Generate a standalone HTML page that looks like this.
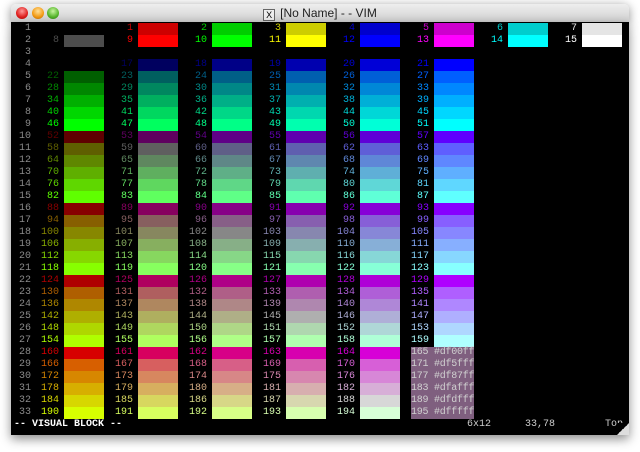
<!DOCTYPE html>
<html><head><meta charset="utf-8"><style>
body{margin:0;width:640px;height:452px;background:#fff;position:relative;overflow:hidden;font-family:"Liberation Mono",monospace}
#tb{position:absolute;left:11px;top:4px;width:618px;height:18px;background:linear-gradient(#eeeeee,#d0d0d0);border-radius:5px 5px 0 0;box-shadow:0 2px 10px rgba(0,0,0,.45)}
.dot{position:absolute;top:3px;width:12px;height:12px;border-radius:50%}
#title{position:absolute;left:0;right:0;top:2px;text-align:center;font:12px "Liberation Sans",sans-serif;color:#222}
#xi{display:inline-block;width:10px;height:10px;border:1px solid #666;background:#eee;font-size:9px;line-height:10px;vertical-align:-1px;margin-right:5px;color:#000}
#t{position:absolute;left:11px;top:22px;width:618px;height:413px;background:#000;box-shadow:0 4px 10px rgba(0,0,0,.45);font-size:10px;line-height:12px}
p{margin:0;height:12px;position:relative;padding-left:19px;white-space:nowrap}
p a{position:absolute;left:0;width:20px;text-align:right;color:#8a8a8a}
u{display:inline-block;width:29px;text-align:right;margin-right:45px;text-decoration:none;position:relative;height:12px;vertical-align:top}
u::after{content:"";position:absolute;left:34px;top:0;width:40px;height:12px;background:currentColor}
.s{position:absolute;left:400px;top:0;width:63px;height:12px;background:#7f5f7f;color:#d0d0d0;letter-spacing:-.25px}
#st{position:absolute;left:3px;top:397px;width:612px;color:#fff;height:12px}
</style></head><body>
<div id="tb">
<div class="dot" style="left:5px;background:radial-gradient(circle at 50% 35%,#ff9a9a,#e0201e 60%,#a00)"></div>
<div class="dot" style="left:21px;background:radial-gradient(circle at 50% 35%,#ffe09a,#f39a12 60%,#b86000)"></div>
<div class="dot" style="left:36px;background:radial-gradient(circle at 50% 35%,#c8f5a0,#55b52a 60%,#2a7a10)"></div>
<div id="title"><span id="xi">X</span>[No Name] - - VIM</div>
</div>
<div id="t"><div style="height:1px"></div>
<p><a>1</a><u style="color:#000">0</u><u style="color:#cd0000">1</u><u style="color:#00cd00">2</u><u style="color:#cdcd00">3</u><u style="color:#0000cd">4</u><u style="color:#cd00cd">5</u><u style="color:#00cdcd">6</u><u style="color:#e5e5e5">7</u></p>
<p><a>2</a><u style="color:#4d4d4d">8</u><u style="color:#ff0000">9</u><u style="color:#00ff00">10</u><u style="color:#ffff00">11</u><u style="color:#0000ff">12</u><u style="color:#ff00ff">13</u><u style="color:#00ffff">14</u><u style="color:#ffffff">15</u></p>
<p><a>3</a></p>
<p><a>4</a><u style="color:#000000">16</u><u style="color:#00005f">17</u><u style="color:#000087">18</u><u style="color:#0000af">19</u><u style="color:#0000d7">20</u><u style="color:#0000ff">21</u></p>
<p><a>5</a><u style="color:#005f00">22</u><u style="color:#005f5f">23</u><u style="color:#005f87">24</u><u style="color:#005faf">25</u><u style="color:#005fd7">26</u><u style="color:#005fff">27</u></p>
<p><a>6</a><u style="color:#008700">28</u><u style="color:#00875f">29</u><u style="color:#008787">30</u><u style="color:#0087af">31</u><u style="color:#0087d7">32</u><u style="color:#0087ff">33</u></p>
<p><a>7</a><u style="color:#00af00">34</u><u style="color:#00af5f">35</u><u style="color:#00af87">36</u><u style="color:#00afaf">37</u><u style="color:#00afd7">38</u><u style="color:#00afff">39</u></p>
<p><a>8</a><u style="color:#00d700">40</u><u style="color:#00d75f">41</u><u style="color:#00d787">42</u><u style="color:#00d7af">43</u><u style="color:#00d7d7">44</u><u style="color:#00d7ff">45</u></p>
<p><a>9</a><u style="color:#00ff00">46</u><u style="color:#00ff5f">47</u><u style="color:#00ff87">48</u><u style="color:#00ffaf">49</u><u style="color:#00ffd7">50</u><u style="color:#00ffff">51</u></p>
<p><a>10</a><u style="color:#5f0000">52</u><u style="color:#5f005f">53</u><u style="color:#5f0087">54</u><u style="color:#5f00af">55</u><u style="color:#5f00d7">56</u><u style="color:#5f00ff">57</u></p>
<p><a>11</a><u style="color:#5f5f00">58</u><u style="color:#5f5f5f">59</u><u style="color:#5f5f87">60</u><u style="color:#5f5faf">61</u><u style="color:#5f5fd7">62</u><u style="color:#5f5fff">63</u></p>
<p><a>12</a><u style="color:#5f8700">64</u><u style="color:#5f875f">65</u><u style="color:#5f8787">66</u><u style="color:#5f87af">67</u><u style="color:#5f87d7">68</u><u style="color:#5f87ff">69</u></p>
<p><a>13</a><u style="color:#5faf00">70</u><u style="color:#5faf5f">71</u><u style="color:#5faf87">72</u><u style="color:#5fafaf">73</u><u style="color:#5fafd7">74</u><u style="color:#5fafff">75</u></p>
<p><a>14</a><u style="color:#5fd700">76</u><u style="color:#5fd75f">77</u><u style="color:#5fd787">78</u><u style="color:#5fd7af">79</u><u style="color:#5fd7d7">80</u><u style="color:#5fd7ff">81</u></p>
<p><a>15</a><u style="color:#5fff00">82</u><u style="color:#5fff5f">83</u><u style="color:#5fff87">84</u><u style="color:#5fffaf">85</u><u style="color:#5fffd7">86</u><u style="color:#5fffff">87</u></p>
<p><a>16</a><u style="color:#870000">88</u><u style="color:#87005f">89</u><u style="color:#870087">90</u><u style="color:#8700af">91</u><u style="color:#8700d7">92</u><u style="color:#8700ff">93</u></p>
<p><a>17</a><u style="color:#875f00">94</u><u style="color:#875f5f">95</u><u style="color:#875f87">96</u><u style="color:#875faf">97</u><u style="color:#875fd7">98</u><u style="color:#875fff">99</u></p>
<p><a>18</a><u style="color:#878700">100</u><u style="color:#87875f">101</u><u style="color:#878787">102</u><u style="color:#8787af">103</u><u style="color:#8787d7">104</u><u style="color:#8787ff">105</u></p>
<p><a>19</a><u style="color:#87af00">106</u><u style="color:#87af5f">107</u><u style="color:#87af87">108</u><u style="color:#87afaf">109</u><u style="color:#87afd7">110</u><u style="color:#87afff">111</u></p>
<p><a>20</a><u style="color:#87d700">112</u><u style="color:#87d75f">113</u><u style="color:#87d787">114</u><u style="color:#87d7af">115</u><u style="color:#87d7d7">116</u><u style="color:#87d7ff">117</u></p>
<p><a>21</a><u style="color:#87ff00">118</u><u style="color:#87ff5f">119</u><u style="color:#87ff87">120</u><u style="color:#87ffaf">121</u><u style="color:#87ffd7">122</u><u style="color:#87ffff">123</u></p>
<p><a>22</a><u style="color:#af0000">124</u><u style="color:#af005f">125</u><u style="color:#af0087">126</u><u style="color:#af00af">127</u><u style="color:#af00d7">128</u><u style="color:#af00ff">129</u></p>
<p><a>23</a><u style="color:#af5f00">130</u><u style="color:#af5f5f">131</u><u style="color:#af5f87">132</u><u style="color:#af5faf">133</u><u style="color:#af5fd7">134</u><u style="color:#af5fff">135</u></p>
<p><a>24</a><u style="color:#af8700">136</u><u style="color:#af875f">137</u><u style="color:#af8787">138</u><u style="color:#af87af">139</u><u style="color:#af87d7">140</u><u style="color:#af87ff">141</u></p>
<p><a>25</a><u style="color:#afaf00">142</u><u style="color:#afaf5f">143</u><u style="color:#afaf87">144</u><u style="color:#afafaf">145</u><u style="color:#afafd7">146</u><u style="color:#afafff">147</u></p>
<p><a>26</a><u style="color:#afd700">148</u><u style="color:#afd75f">149</u><u style="color:#afd787">150</u><u style="color:#afd7af">151</u><u style="color:#afd7d7">152</u><u style="color:#afd7ff">153</u></p>
<p><a>27</a><u style="color:#afff00">154</u><u style="color:#afff5f">155</u><u style="color:#afff87">156</u><u style="color:#afffaf">157</u><u style="color:#afffd7">158</u><u style="color:#afffff">159</u></p>
<p><a>28</a><u style="color:#d70000">160</u><u style="color:#d7005f">161</u><u style="color:#d70087">162</u><u style="color:#d700af">163</u><u style="color:#d700d7">164</u><span class="s">165 #df00ff</span></p>
<p><a>29</a><u style="color:#d75f00">166</u><u style="color:#d75f5f">167</u><u style="color:#d75f87">168</u><u style="color:#d75faf">169</u><u style="color:#d75fd7">170</u><span class="s">171 #df5fff</span></p>
<p><a>30</a><u style="color:#d78700">172</u><u style="color:#d7875f">173</u><u style="color:#d78787">174</u><u style="color:#d787af">175</u><u style="color:#d787d7">176</u><span class="s">177 #df87ff</span></p>
<p><a>31</a><u style="color:#d7af00">178</u><u style="color:#d7af5f">179</u><u style="color:#d7af87">180</u><u style="color:#d7afaf">181</u><u style="color:#d7afd7">182</u><span class="s">183 #dfafff</span></p>
<p><a>32</a><u style="color:#d7d700">184</u><u style="color:#d7d75f">185</u><u style="color:#d7d787">186</u><u style="color:#d7d7af">187</u><u style="color:#d7d7d7">188</u><span class="s">189 #dfdfff</span></p>
<p><a>33</a><u style="color:#d7ff00">190</u><u style="color:#d7ff5f">191</u><u style="color:#d7ff87">192</u><u style="color:#d7ffaf">193</u><u style="color:#d7ffd7">194</u><span class="s">195 #dfffff</span></p>
<div id="st"><b style="font-weight:bold">-- VISUAL BLOCK --</b><span style="position:absolute;left:453px;color:#ccc">6x12</span><span style="position:absolute;left:511px;color:#ccc">33,78</span><span style="position:absolute;left:591px;color:#ccc">Top</span></div>
<div style="position:absolute;right:0;bottom:0;width:12px;height:12px;background:linear-gradient(135deg,#000 50%,#ddd 50%)"></div>
</div>
</body></html>
